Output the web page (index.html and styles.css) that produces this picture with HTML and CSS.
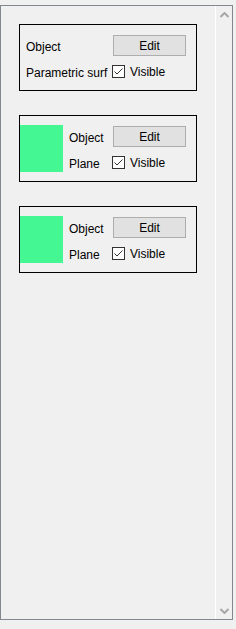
FILE: index.html
```html
<!DOCTYPE html>
<html lang="en">
<head>
<meta charset="UTF-8">
<meta name="viewport" content="width=device-width, initial-scale=1.0">
<title>Objects</title>
<link rel="stylesheet" href="styles.css">
</head>
<body>
<div class="panel">
  <div class="list">
    <div class="card">
      <div class="info">
        <div class="label">Object</div>
        <button class="edit-btn">Edit</button>
        <div class="label">Parametric surf</div>
        <label class="visible">
          <svg class="check" width="13" height="13" viewBox="0 0 13 13"><rect x="0.5" y="0.5" width="12" height="12" fill="#fff" stroke="#333"/><path d="M2.5 6.5 L5 9 L10.5 3.5" fill="none" stroke="#333" stroke-width="1"/></svg>
          Visible
        </label>
      </div>
    </div>
    <div class="card">
      <div class="swatch"></div>
      <div class="info">
        <div class="label">Object</div>
        <button class="edit-btn">Edit</button>
        <div class="label">Plane</div>
        <label class="visible">
          <svg class="check" width="13" height="13" viewBox="0 0 13 13"><rect x="0.5" y="0.5" width="12" height="12" fill="#fff" stroke="#333"/><path d="M2.5 6.5 L5 9 L10.5 3.5" fill="none" stroke="#333" stroke-width="1"/></svg>
          Visible
        </label>
      </div>
    </div>
    <div class="card">
      <div class="swatch"></div>
      <div class="info">
        <div class="label">Object</div>
        <button class="edit-btn">Edit</button>
        <div class="label">Plane</div>
        <label class="visible">
          <svg class="check" width="13" height="13" viewBox="0 0 13 13"><rect x="0.5" y="0.5" width="12" height="12" fill="#fff" stroke="#333"/><path d="M2.5 6.5 L5 9 L10.5 3.5" fill="none" stroke="#333" stroke-width="1"/></svg>
          Visible
        </label>
      </div>
    </div>
  </div>
  <div class="scrollbar">
    <div class="arrow">
      <svg width="9" height="6" viewBox="0 0 9 6"><path d="M0.5 5 L4.5 1 L8.5 5" fill="none" stroke="#a6a6a6" stroke-width="2"/></svg>
    </div>
    <div class="arrow">
      <svg width="9" height="6" viewBox="0 0 9 6"><path d="M0.5 1 L4.5 5 L8.5 1" fill="none" stroke="#a6a6a6" stroke-width="2"/></svg>
    </div>
  </div>
</div>
</body>
</html>
```

FILE: styles.css
```css
/* Window background */
body {
  margin: 0;
  background: #f0f0f0;
  font-family: "Liberation Sans", Arial, sans-serif;
  font-size: 12px;
  color: #000;
}

/* Outer list frame with scrollbar */
.panel {
  box-sizing: border-box;
  margin-top: 5px;
  width: 233px;
  height: 615px;
  border: 1px solid #828790;
  display: flex;
}
.list {
  flex: 1;
  padding: 18px 0 0 18px;
  display: flex;
  flex-direction: column;
  gap: 24px;
}

/* One object entry */
.card {
  box-sizing: border-box;
  width: 178px;
  height: 67px;
  border: 1px solid #000;
  display: flex;
  align-items: flex-start;
}
.swatch {
  width: 43px;
  height: 47px;
  margin-top: 9px;
  background: #45f792;
  flex: 0 0 auto;
}
.info {
  flex: 1;
  display: grid;
  grid-template-columns: minmax(0, 1fr) 74px;
  grid-auto-rows: 21px;
  column-gap: 6px;
  row-gap: 5px;
  padding: 10px 10px 0 6px;
  min-width: 0;
}
.label {
  display: flex;
  align-items: center;
  padding-top: 2px;
  white-space: nowrap;
}
.edit-btn {
  box-sizing: border-box;
  margin: 0 0 0 1px;
  width: 73px;
  height: 21px;
  border: 1px solid #adadad;
  background: #e1e1e1;
  font: inherit;
  color: #000;
  padding: 1px 0 0;
}
.visible {
  display: flex;
  align-items: center;
  gap: 5px;
  padding-top: 1px;
}
.check {
  display: block;
  margin-top: -1px;
}

/* Vertical scrollbar */
.scrollbar {
  width: 16px;
  border-left: 1px solid #fff;
  display: flex;
  flex-direction: column;
  justify-content: space-between;
}
.arrow {
  height: 17px;
  display: flex;
  align-items: center;
  justify-content: center;
}
```
